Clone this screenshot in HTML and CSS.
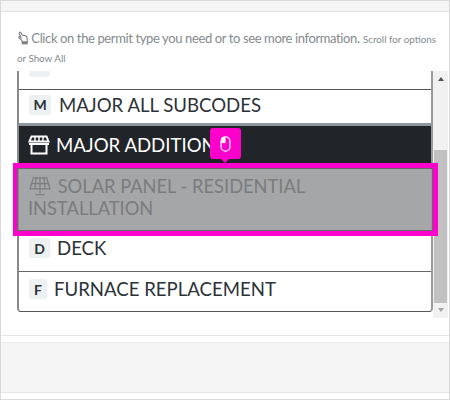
FILE: index.html
```html
<!DOCTYPE html>
<html lang="en">
<head>
<meta charset="utf-8">
<title>Permit type</title>
<link rel="stylesheet" href="styles.css">
</head>
<body>
<div class="frame">
  <div class="topband"></div>
  <main class="content">
    <div class="hint">
      <p class="hint-line">
        <svg class="hand" viewBox="0 0 14 16" width="12" height="14" aria-hidden="true"><path d="M3 1.500c.8-.6 1.600-.2 1.900.6l1 2.400 3.400.7c1.300.3 2.200 1.200 2.400 2.400l.3 2.400v2.500H6.500L4.800 10 2.300 7.800c-.7-.8.2-1.800 1.100-1.300l1.100.7-1.800-4.200C2.400 2.400 2.500 1.900 3 1.500Z" fill="none" stroke="#7b7f82" stroke-width="1.300"/><rect x="5.500" y="12.600" width="7" height="2.800" fill="#7b7f82"/></svg>
        <span class="hint-main">Click on the permit type you need or to see more information.</span>
        <span class="hint-small">Scroll for options</span>
      </p>
      <p class="hint-line"><span class="hint-small">or Show All</span></p>
    </div>
    <div class="listwrap">
      <div class="list">
        <div class="row row-clipped"><span class="pill"></span></div>
        <div class="row row-major"><span class="pill">M</span>MAJOR ALL SUBCODES</div>
        <div class="row row-dark">
          <svg class="store" viewBox="0 0 22 20" width="22" height="20" aria-hidden="true"><path d="M3.500 1.500h15l2 5H1.500Z" fill="none" stroke="#fff" stroke-width="2"/><path d="M7 1.500v5M11 1.500v5M15 1.500v5" stroke="#fff" stroke-width="1.500"/><path d="M1 8h20v2H1Z" fill="#fff"/><path d="M3.500 10v8.500h15V10" fill="none" stroke="#fff" stroke-width="2"/></svg>
          MAJOR ADDITION
        </div>
        <div class="row row-solar">
          <svg class="solar" viewBox="0 0 24 20" width="24" height="19" aria-hidden="true"><path d="M5 1h14l3.500 11.500h-21ZM12 1v11.500M8 1l-1.500 11.500M16 1l1.500 11.500M3 7h18M12 12.500v5.500M7.500 18.500h9" fill="none" stroke="#7c7e80" stroke-width="1.300"/></svg>
          <span class="solar-text">SOLAR PANEL - RESIDENTIAL INSTALLATION</span>
        </div>
        <div class="row row-deck"><span class="pill">D</span>DECK</div>
        <div class="row row-furnace"><span class="pill pill-narrow">F</span>FURNACE REPLACEMENT</div>
      </div>
      <div class="scrollbar">
        <span class="arrow arrow-up"></span>
        <span class="track-gap"></span>
        <span class="thumb"></span>
        <span class="arrow arrow-down"></span>
      </div>
      <div class="highlight"></div>
      <div class="tip">
        <svg viewBox="0 0 12 18" width="11" height="16" aria-hidden="true"><rect x="1" y="1" width="10" height="16" rx="5" fill="none" stroke="#fff" stroke-width="1.400"/><rect x="1.500" y="1.500" width="4.500" height="6.500" fill="#fff"/></svg>
      </div>
    </div>
  </main>
  <div class="gap"></div>
  <footer class="footer"></footer>
</div>
</body>
</html>
```
FILE: styles.css
```css
* { box-sizing: border-box; }
html, body { margin: 0; padding: 0; background: #fff; }
body { width: 450px; height: 400px; overflow: hidden; font-family: Lato, "Liberation Sans", sans-serif; }
.frame { width: 450px; height: 400px; border: 1px solid #d9d9d9; display: flex; flex-direction: column; background: #fff; }
.topband { height: 11px; background: #f5f5f5; border-bottom: 1px solid #e2e2e2; flex: none; }
.content { height: 324px; flex: none; border-bottom: 1px solid #e4e4e4; padding: 17px 0 0 16px; }
.hint { height: 42px; color: #858a8d; }
.hint-line { margin: 0; height: 19px; font-size: 13px; line-height: 19px; white-space: nowrap; }
.hint-main { letter-spacing: -0.38px; }
.hint-small { font-size: 9.800px; }
.hand { vertical-align: -2px; margin-right: -1px; }
.listwrap { position: relative; display: flex; width: 431px; height: 247px; }
.list { width: 416px; height: 241px; border: 1px solid #555; border-top: 0; border-left: 2px solid #8a8a8a; border-right: 2px solid #9a9a9a; border-radius: 0 0 4px 4px; overflow: hidden; color: #2b3238; font-size: 18.600px; }
.row { display: flex; align-items: center; border-bottom: 1px solid #555; padding-left: 10px; }
.row-clipped { height: 19px; align-items: flex-end; padding-bottom: 12px; overflow: hidden; }
.row-major { height: 36px; padding-bottom: 4px; border-bottom: 3px solid #8f979c; }
.row-major .pill { margin-right: 8px; width: 22px; }
.row-dark { height: 38px; background: #212529; color: #fff; border-bottom: 0; padding-left: 9px; }
.row-solar { display: block; height: 70px; background: #a5a6a8; color: #7a7c7e; padding: 11px 8px 0 9px; font-size: 18.300px; line-height: 22px; border-bottom: 0; }
.row-deck { height: 38px; padding-bottom: 9px; border-bottom: 1px solid #666; }
.row-furnace { height: 39px; padding-bottom: 5px; border-bottom: 0; }
.pill { flex: none; width: 21px; height: 20px; margin-right: 7px; background: #edf1f2; border-radius: 3px; color: #2b3238; font-size: 14px; font-weight: 700; display: flex; align-items: center; justify-content: center; }
.pill-narrow { width: 18px; }
.store { flex: none; margin-right: 6px; }
.solar { vertical-align: -3px; margin-right: 1px; }
.scrollbar { width: 15px; height: 247px; background: #f1f1f1; display: flex; flex-direction: column; align-items: center; }
.arrow { flex: none; width: 0; height: 0; border-left: 3.500px solid transparent; border-right: 3.500px solid transparent; }
.arrow-up { margin-top: 6px; border-bottom: 4px solid #505050; }
.track-gap { height: 69px; flex: none; }
.thumb { flex: none; width: 13px; height: 153px; background: #c1c1c1; }
.arrow-down { margin-top: 5px; border-top: 4px solid #a3a3a3; }
.highlight { position: absolute; left: -4px; top: 92px; width: 425px; height: 73px; border: 5px solid #ff00cc; border-left-width: 4px; box-shadow: inset 0 0 0 1px #66686a; pointer-events: none; }
.tip { position: absolute; left: 193px; top: 57px; width: 31px; height: 31px; background: #ff00cc; border-radius: 3px; display: flex; align-items: center; justify-content: center; }
.tip::after { content: ""; position: absolute; left: 11px; bottom: -4px; border-left: 4px solid transparent; border-right: 4px solid transparent; border-top: 4px solid #ff00cc; }
.gap { height: 6px; flex: none; }
.footer { height: 51px; flex: none; background: #f5f5f5; border-top: 1px solid #eeeeee; border-bottom: 1px solid #e4e4e4; }
```
